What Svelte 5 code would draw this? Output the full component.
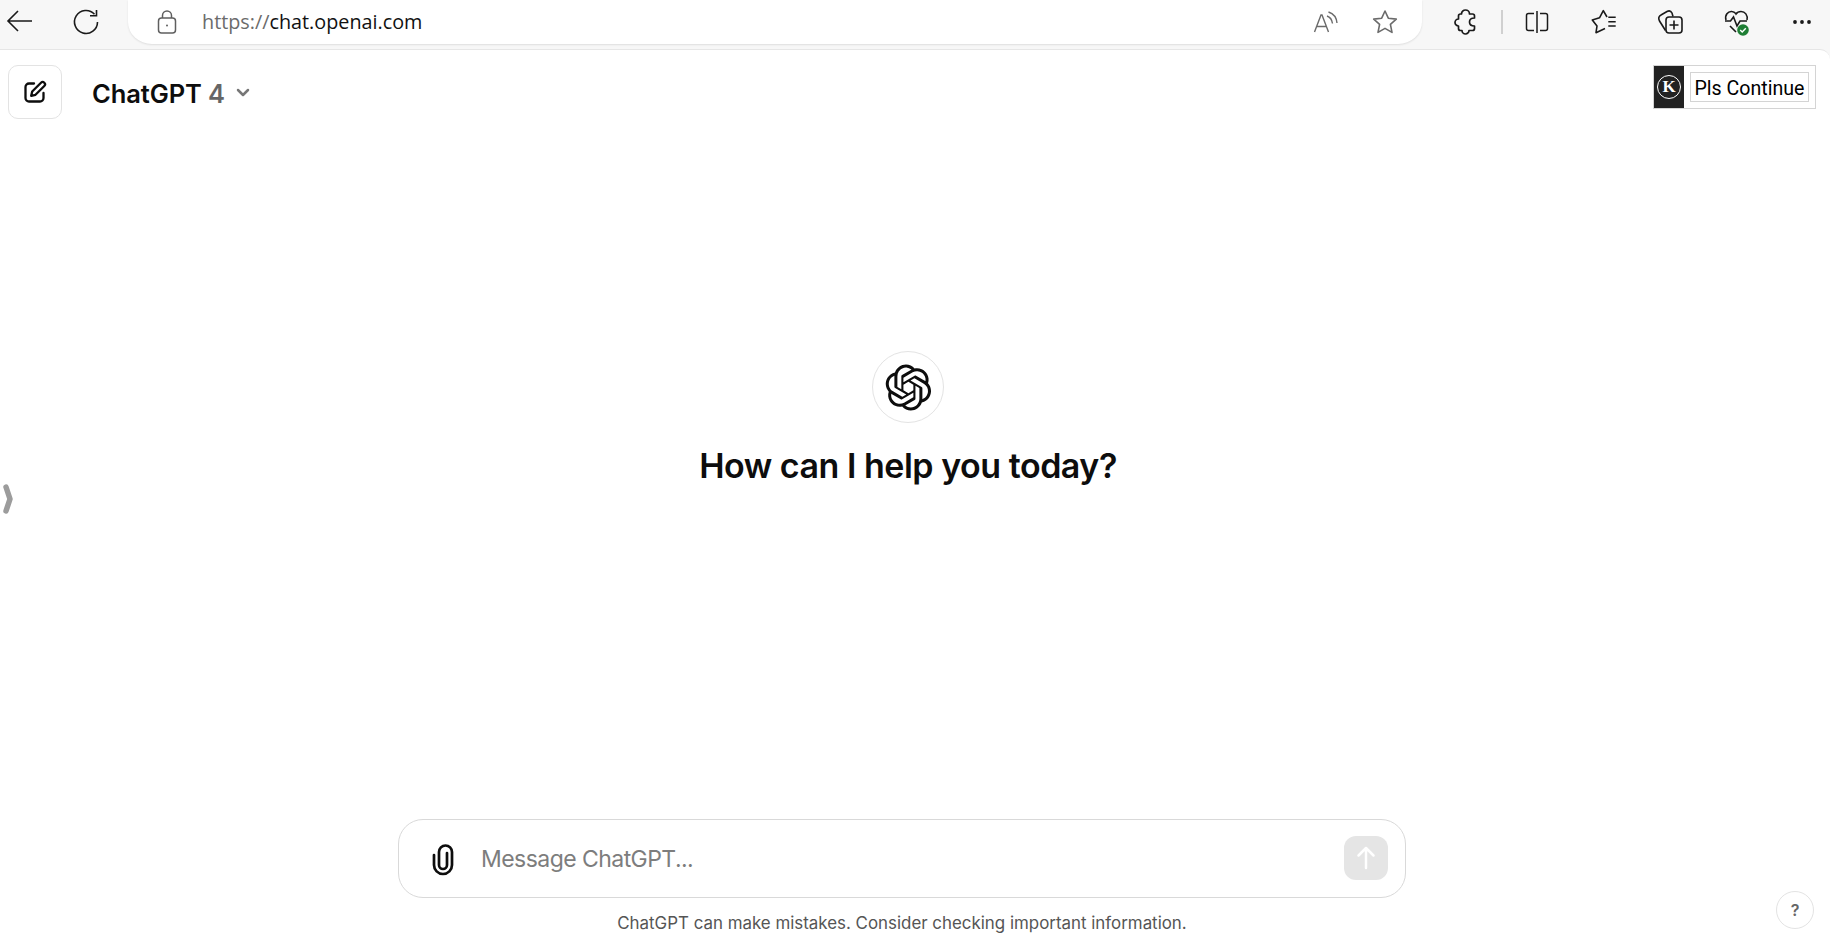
<script>
	const openaiPath =
		'M37.5324 16.8707C37.9808 15.5241 38.1363 14.0974 37.9886 12.6859C37.8409 11.2744 37.3934 9.91076 36.676 8.68622C35.6126 6.83404 33.9882 5.3676 32.0373 4.4985C30.0864 3.62941 27.9098 3.40259 25.8215 3.85078C24.8796 2.7893 23.7219 1.94125 22.4257 1.36341C21.1295 0.785575 19.7249 0.491269 18.3058 0.500197C16.1708 0.495044 14.0893 1.16803 12.3614 2.42214C10.6335 3.67624 9.34853 5.44666 8.6917 7.47815C7.30085 7.76286 5.98686 8.3414 4.8377 9.17505C3.68854 10.0087 2.73073 11.0782 2.02839 12.312C0.956464 14.1591 0.498905 16.2988 0.721698 18.4228C0.944492 20.5467 1.83612 22.5449 3.268 24.1293C2.81966 25.4759 2.66413 26.9026 2.81182 28.3141C2.95951 29.7256 3.40701 31.0892 4.12437 32.3138C5.18791 34.1659 6.8123 35.6322 8.76321 36.5013C10.7141 37.3704 12.8907 37.5973 14.9789 37.1492C15.9208 38.2107 17.0786 39.0587 18.3747 39.6366C19.6709 40.2144 21.0755 40.5087 22.4946 40.4998C24.6307 40.5054 26.7133 39.8321 28.4418 38.5772C30.1704 37.3223 31.4556 35.5506 32.1119 33.5179C33.5027 33.2332 34.8167 32.6547 35.9659 31.821C37.115 30.9874 38.0728 29.9178 38.7752 28.684C39.8458 26.8371 40.3023 24.6979 40.0789 22.5748C39.8556 20.4517 38.9639 18.4544 37.5324 16.8707ZM22.4978 37.8849C20.7443 37.8874 19.0459 37.2733 17.6994 36.1501C17.7601 36.117 17.8666 36.0586 17.936 36.0161L25.9004 31.4156C26.1003 31.3019 26.2663 31.137 26.3813 30.9378C26.4964 30.7386 26.5563 30.5124 26.5549 30.2825V19.0542L29.9213 20.998C29.9389 21.0068 29.9541 21.0198 29.9656 21.0359C29.977 21.052 29.9842 21.0707 29.9867 21.0902V30.3889C29.9842 32.375 29.1946 34.2791 27.7909 35.6841C26.3872 37.0892 24.4838 37.8806 22.4978 37.8849ZM6.39227 31.0064C5.51397 29.4888 5.19742 27.7107 5.49804 25.9832C5.55718 26.0187 5.66048 26.0818 5.73461 26.1244L13.699 30.7248C13.8975 30.8408 14.1233 30.902 14.3532 30.902C14.583 30.902 14.8088 30.8408 15.0073 30.7248L24.731 25.1103V28.9979C24.7321 29.0177 24.7283 29.0376 24.7199 29.0556C24.7115 29.0736 24.6988 29.0893 24.6829 29.1012L16.6317 33.7497C14.9096 34.7416 12.8643 35.0097 10.9447 34.4954C9.02506 33.9811 7.38785 32.7263 6.39227 31.0064ZM4.29707 13.6194C5.17156 12.0998 6.55279 10.9364 8.19885 10.3327C8.19885 10.4013 8.19491 10.5228 8.19491 10.6071V19.808C8.19351 20.0378 8.25334 20.2638 8.36823 20.4629C8.48312 20.6619 8.64893 20.8267 8.84863 20.9404L18.5723 26.5542L15.206 28.4979C15.1894 28.5089 15.1703 28.5155 15.1505 28.5173C15.1307 28.5191 15.1107 28.516 15.0924 28.5082L7.04046 23.8557C5.32135 22.8601 4.06716 21.2235 3.55289 19.3046C3.03862 17.3858 3.30624 15.3413 4.29707 13.6194ZM31.955 20.0556L22.2312 14.4411L25.5976 12.4981C25.6142 12.4872 25.6333 12.4805 25.6531 12.4787C25.6729 12.4769 25.6928 12.4801 25.7111 12.4879L33.7631 17.1364C34.9967 17.849 36.0017 18.8982 36.6606 20.1613C37.3194 21.4244 37.6047 22.849 37.4832 24.2684C37.3617 25.6878 36.8382 27.0432 35.9743 28.1759C35.1103 29.3086 33.9415 30.1717 32.6047 30.6641C32.6047 30.5947 32.6047 30.4733 32.6047 30.3889V21.188C32.6066 20.9586 32.5474 20.7328 32.4332 20.5338C32.319 20.3348 32.154 20.1698 31.955 20.0556ZM35.3055 15.0128C35.2464 14.9765 35.1431 14.9142 35.069 14.8717L27.1045 10.2712C26.906 10.1554 26.6803 10.0943 26.4504 10.0943C26.2206 10.0943 25.9948 10.1554 25.7963 10.2712L16.0726 15.8858V11.9982C16.0715 11.9783 16.0753 11.9585 16.0837 11.9405C16.0921 11.9225 16.1048 11.9068 16.1207 11.8949L24.1719 7.25025C25.4053 6.53903 26.8158 6.19376 28.2383 6.25482C29.6608 6.31589 31.0364 6.78077 32.2044 7.59508C33.3723 8.40939 34.2842 9.53945 34.8334 10.8531C35.3826 12.1667 35.5464 13.6095 35.3055 15.0128ZM14.2424 21.9419L10.8752 19.9981C10.8576 19.9893 10.8423 19.9763 10.8309 19.9602C10.8195 19.9441 10.8122 19.9254 10.8098 19.9058V10.6071C10.8107 9.18295 11.2173 7.78848 11.9819 6.58696C12.7466 5.38544 13.8377 4.42659 15.1275 3.82264C16.4173 3.21869 17.8524 2.99464 19.2649 3.1767C20.6775 3.35876 22.0089 3.93941 23.1034 4.85067C23.0427 4.88379 22.937 4.94215 22.8668 4.98473L14.9024 9.58517C14.7025 9.69878 14.5366 9.86356 14.4215 10.0626C14.3065 10.2616 14.2466 10.4877 14.2479 10.7175L14.2424 21.9419ZM16.071 17.9991L20.4018 15.4978L24.7325 17.9975V22.9985L20.4018 25.4983L16.071 22.9985V17.9991Z';
</script>

<div class="window">
	<div class="toolbar">
		<svg class="back" width="28" height="24" viewBox="0 0 28 24" fill="none" stroke="#1a1a1a" stroke-width="1.6">
			<path d="M26 12H2M12 2 2 12l10 10" />
		</svg>
		<svg class="reload" width="28" height="28" viewBox="0 0 28 28" fill="none" stroke="#1a1a1a" stroke-width="1.6">
			<path d="M22.5 6.200A11.500 11.500 0 1 0 25.500 14" />
			<path d="M24.500 2v5.800H18" />
		</svg>

		<div class="address">
			<svg class="lock" width="20" height="24" viewBox="0 0 20 24" fill="none" stroke="#5f5f5f" stroke-width="1.5">
				<rect x="1.5" y="8" width="17" height="15" rx="3" />
				<path d="M5.5 8V5.5a4.5 4.5 0 0 1 9 0V8" />
				<circle cx="10" cy="15.5" r="1" fill="#5f5f5f" stroke="none" />
			</svg>
			<span class="url"><span class="scheme">https://</span>chat.openai.com</span>
			<div class="address-end">
				<svg width="26" height="24" viewBox="0 0 26 24" fill="none" stroke="#6b6b6b" stroke-width="1.4">
					<path d="M2.500 22 9 5h1l6.500 17M5 16.500h9" />
					<path d="M15 6c3 1 5 4 5.500 7.500M16.500 2c4.500 1.500 8 5.500 8.500 11" />
				</svg>
				<svg width="26" height="26" viewBox="0 0 26 26" fill="none" stroke="#6b6b6b" stroke-width="1.6" stroke-linejoin="round">
					<path d="m13 2 3.300 7.200 8 .9-5.900 5.300 1.600 8L13 19.400l-7 4 1.600-8L1.700 10.100l8-.9z" />
				</svg>
			</div>
		</div>

		<div class="tools">
			<svg class="puzzle" width="24" height="26" viewBox="0 0 24 26" fill="none" stroke="#1a1a1a" stroke-width="1.7" stroke-linejoin="round">
				<path d="M7.500 5a4 4 0 0 1 8 0h3a2 2 0 0 1 2 2v2c-3 0-5 1.500-5 4s2 4 5 4v2.500a2 2 0 0 1-2 2h-3.500a3.500 3.500 0 0 1-7 0H6.500a2 2 0 0 1-2-2V17a3.500 3.500 0 0 1 0-7V7a2 2 0 0 1 2-2z" />
			</svg>
			<span class="divider"></span>
			<svg class="split" width="24" height="26" viewBox="0 0 24 26" fill="none" stroke="#1a1a1a" stroke-width="1.5">
				<path d="M9 4.500H3.500a2 2 0 0 0-2 2v13a2 2 0 0 0 2 2H9M15 4.500h5.500a2 2 0 0 1 2 2v13a2 2 0 0 1-2 2H15M12 2v22" />
			</svg>
			<svg class="favs" width="26" height="26" viewBox="0 0 26 26" fill="none" stroke="#1a1a1a" stroke-width="1.6" stroke-linejoin="round">
				<path d="M16 8 12.300 1.700 8.500 8.800 1.300 11 6 17l-1 6.700 9-4.200" />
				<path d="M17.300 8.300h7.400M17.300 12.700h7.400M17.300 17h7.400" stroke-width="1.400" />
			</svg>
			<svg class="collections" width="26" height="26" viewBox="0 0 26 26" fill="none" stroke="#1a1a1a" stroke-width="1.6">
				<path d="M8.500 21.500 2.500 12C1 9 2 7 4 6l6-3.500C12 1.500 14 2 15 4l1 3.500" />
				<rect x="9" y="8" width="16" height="16" rx="3" />
				<path d="M17 11.500v9M12.500 16h9" />
			</svg>
			<svg class="heart" width="28" height="28" viewBox="0 0 28 28" fill="none">
				<g stroke="#1a1a1a" stroke-width="1.6" transform="translate(0 1)">
					<path d="M3 11C1.500 6 5 2 9 2.500c2 .2 3.500 1.500 4 2.500 1-1.500 3-2.500 5-2.500 4 0 7 3.500 6 8.500" />
					<path d="M2 12h5.500l3-4 3.500 9 3-5h7M7 17l6 6" />
				</g>
				<circle cx="20" cy="22" r="5.800" fill="#1e7e34" />
				<path d="m17.200 22 2 2 3.600-3.800" stroke="#fff" stroke-width="1.400" />
			</svg>
			<svg class="dots" width="20" height="6" viewBox="0 0 20 6" fill="#1a1a1a">
				<circle cx="3" cy="3" r="1.900" /><circle cx="10" cy="3" r="1.900" /><circle cx="17" cy="3" r="1.900" />
			</svg>
		</div>
	</div>

	<main class="page">
		<header class="header">
			<div class="header-left">
				<button class="new-chat" aria-label="New chat">
					<svg width="24" height="24" viewBox="0 0 24 24" fill="none" stroke="#0d0d0d" stroke-width="2.300" stroke-linecap="round" stroke-linejoin="round">
						<path d="M11 3.500H6A3.500 3.500 0 0 0 2.500 7v11A3.500 3.500 0 0 0 6 21.500h11a3.500 3.500 0 0 0 3.500-3.500v-5" />
						<path d="M18 2.700a2.300 2.300 0 0 1 3.300 3.300l-8.800 8.800-4.300 1 1-4.300z" />
					</svg>
				</button>
				<div class="model">
					<span>ChatGPT <span class="version">4</span></span>
					<svg width="14" height="10" viewBox="0 0 14 10" fill="none" stroke="#777" stroke-width="2.500" stroke-linecap="round" stroke-linejoin="round">
						<path d="m2 2 5 5 5-5" />
					</svg>
				</div>
			</div>
			<div class="ext">
				<div class="ext-logo"><span>K</span></div>
				<div class="ext-button">Pls Continue</div>
			</div>
		</header>

		<section class="center">
			<div class="logo">
				<svg width="47" height="47" viewBox="0 0 41 41" fill="#0d0d0d">
					<path d={openaiPath} />
				</svg>
			</div>
			<h1>How can I help you today?</h1>
		</section>

		<div class="composer">
			<svg class="clip" width="24" height="32" viewBox="0 0 24 32" fill="none" stroke="#0d0d0d" stroke-width="2.700" stroke-linecap="round">
				<path d="M3 11v10a9 9 0 0 0 18 0V8a6.500 6.500 0 0 0-13 0v13a4 4 0 0 0 8 0V9" />
			</svg>
			<span class="placeholder">Message ChatGPT...</span>
			<button class="send" aria-label="Send">
				<svg width="20" height="24" viewBox="0 0 20 24" fill="none" stroke="#fff" stroke-width="2.500" stroke-linecap="round" stroke-linejoin="round">
					<path d="M10 22V2M2.500 9.500 10 2l7.500 7.500" />
				</svg>
			</button>
		</div>
		<p class="disclaimer">ChatGPT can make mistakes. Consider checking important information.</p>

		<svg class="handle" width="10" height="30" viewBox="0 0 10 30" fill="none" stroke="#9c9c9c" stroke-width="5.500" stroke-linejoin="round" stroke-linecap="round">
			<path d="m3 3 4 12-4 12" />
		</svg>
		<button class="help">?</button>
	</main>
</div>

<style>
	:global(body) {
		margin: 0;
		background: #f7f7f7;
	}

	.window {
		height: 942px;
		display: flex;
		flex-direction: column;
		overflow: hidden;
		font-family: Inter, 'Liberation Sans', sans-serif;
		color: #0d0d0d;
	}

	.toolbar {
		height: 49px;
		flex: none;
		display: flex;
		align-items: flex-start;
		background: #f7f7f7;
		box-sizing: border-box;
	}

	.back {
		margin: 9px 0 0 6px;
	}

	.reload {
		margin: 8px 0 0 38px;
	}

	.address {
		width: 1294px;
		height: 44px;
		margin-left: 28px;
		background: #fff;
		border-radius: 0 0 24px 24px / 0 0 22px 22px;
		box-shadow: 0 1px 2px rgba(0, 0, 0, 0.1);
		display: flex;
		align-items: center;
		padding: 0 24px 0 29px;
		box-sizing: border-box;
	}

	.lock {
		flex: none;
	}

	.url {
		margin: -2px 0 0 25px;
		font-family: 'Open Sans', sans-serif;
		font-size: 19.800px;
		color: #111;
	}

	.scheme {
		color: #6b6b6b;
	}

	.address-end {
		margin-left: auto;
		display: flex;
		align-items: center;
		gap: 34px;
	}

	.tools {
		display: flex;
		align-items: center;
		height: 44px;
	}

	.puzzle {
		margin-left: 32px;
	}

	.divider {
		width: 2px;
		height: 24px;
		margin-left: 23px;
		background: #d0d0d0;
	}

	.split {
		margin-left: 22px;
	}

	.favs {
		margin-left: 42px;
	}

	.collections {
		margin-left: 40px;
	}

	.heart {
		margin-left: 40px;
	}

	.dots {
		margin-left: 41px;
	}

	.page {
		position: relative;
		flex: 1;
		display: flex;
		flex-direction: column;
		background: #fff;
		border-top: 1px solid #e6e6e6;
		border-top-right-radius: 10px;
		min-height: 0;
	}

	.header {
		flex: none;
		display: flex;
		justify-content: space-between;
		align-items: flex-start;
		padding: 15px 14px 0 8px;
	}

	.header-left {
		display: flex;
		align-items: center;
	}

	.new-chat {
		width: 54px;
		height: 54px;
		padding: 0;
		display: flex;
		align-items: center;
		justify-content: center;
		background: #fff;
		border: 1px solid #e3e3e3;
		border-radius: 10px;
	}

	.model {
		margin: 2px 0 0 30px;
		display: flex;
		align-items: center;
		font-size: 25.500px;
		font-weight: 600;
		letter-spacing: -0.1px;
		white-space: pre;
	}

	.version {
		color: #666;
	}

	.model svg {
		margin-left: 11px;
	}

	.ext {
		width: 163px;
		height: 44px;
		box-sizing: border-box;
		display: flex;
		border: 1px solid #d4d4d4;
		background: #fff;
	}

	.ext-logo {
		width: 30px;
		flex: none;
		display: flex;
		align-items: center;
		justify-content: center;
		background: #222;
	}

	.ext-logo span {
		width: 24px;
		height: 24px;
		box-sizing: border-box;
		border: 1.500px solid #fff;
		border-radius: 50%;
		color: #fff;
		font-family: 'Liberation Serif', serif;
		font-size: 17px;
		font-weight: 700;
		line-height: 21px;
		text-align: center;
	}

	.ext-button {
		margin: 6px;
		flex: 1;
		border: 1px solid #d4d4d4;
		font-family: Roboto, sans-serif;
		font-size: 19.600px;
		line-height: 31px;
		text-align: center;
		color: #000;
	}

	.center {
		flex: 1;
		display: flex;
		flex-direction: column;
		align-items: center;
		justify-content: flex-start;
		padding: 232px 14px 0 0;
	}

	.logo {
		width: 72px;
		height: 72px;
		box-sizing: border-box;
		display: flex;
		align-items: center;
		justify-content: center;
		border: 1px solid #e3e3e3;
		border-radius: 50%;
	}

	h1 {
		margin: 22px 0 0;
		font-size: 34px;
		font-weight: 600;
		letter-spacing: -0.480px;
		line-height: 42px;
	}

	.composer {
		flex: none;
		width: 1008px;
		height: 79px;
		margin-left: 398px;
		box-sizing: border-box;
		display: flex;
		align-items: center;
		padding: 0 17px 0 32px;
		border: 1px solid #d9d9d9;
		border-radius: 25px;
	}

	.clip {
		flex: none;
		margin-top: 3px;
	}

	.placeholder {
		margin-left: 26px;
		font-size: 23px;
		letter-spacing: -0.550px;
		color: #7d7d7d;
	}

	.send {
		margin-left: auto;
		margin-top: -2px;
		width: 44px;
		height: 44px;
		padding: 0;
		display: flex;
		align-items: center;
		justify-content: center;
		background: #e5e5e5;
		border: none;
		border-radius: 12px;
	}

	.disclaimer {
		flex: none;
		margin: 0;
		height: 44px;
		width: 1830px;
		padding-right: 26px;
		box-sizing: border-box;
		font-size: 16.900px;
		line-height: 50px;
		text-align: center;
		color: #555;
	}

	.handle {
		position: absolute;
		left: 3px;
		top: 434px;
	}

	.help {
		position: absolute;
		right: 16px;
		bottom: 13px;
		width: 38px;
		height: 38px;
		padding: 0;
		background: #fff;
		border: 1px solid #e3e3e3;
		border-radius: 50%;
		font-family: Inter, sans-serif;
		font-size: 16px;
		font-weight: 600;
		color: #666;
	}
</style>
